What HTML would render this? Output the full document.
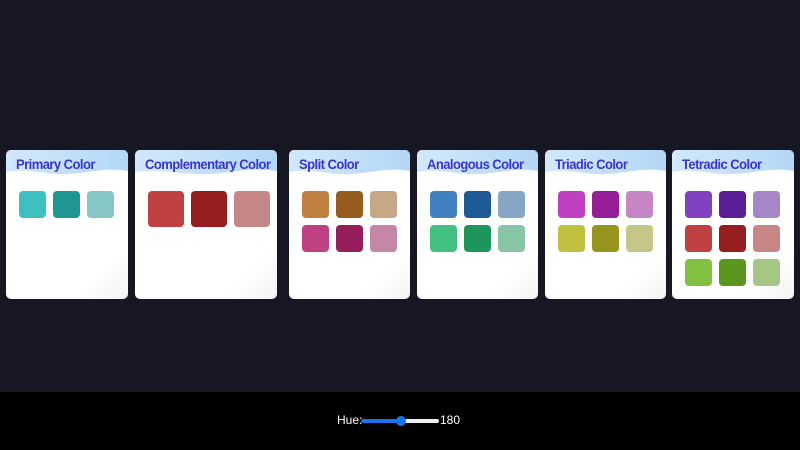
<!DOCTYPE html><html><head><style>
body{margin:0;width:800px;height:450px;background:#161722;position:relative;overflow:hidden;font-family:"Liberation Sans",sans-serif}
.card{position:absolute;top:150px;height:149px;background:linear-gradient(135deg,#fff 80%,#f3f3f5);border-radius:5px;overflow:hidden}
.hd{position:absolute;left:0;top:0;right:0;height:28px}
.hd svg{position:absolute;left:0;top:0;width:100%;height:28px}
.t{position:absolute;left:10px;top:6px;font-size:14px;font-weight:bold;color:#3b35c8;letter-spacing:-0.6px;white-space:nowrap;transform:scaleX(0.93);transform-origin:left}
.s{position:absolute;border-radius:4px}
.bar{position:absolute;left:0;top:392px;width:800px;height:58px;background:#000}
</style></head><body>
<div id="c"></div>
<div class="bar">
<span style="position:absolute;left:337px;top:21px;color:#fff;font-size:12px">Hue:</span>
<div style="position:absolute;left:361px;top:27px;width:40px;height:4px;background:#1a73e8;border-radius:2px"></div>
<div style="position:absolute;left:401px;top:27px;width:38px;height:4px;background:#eee;border-radius:2px"></div>
<div style="position:absolute;left:396px;top:24px;width:10px;height:10px;background:#1a73e8;border-radius:50%"></div>
<span style="position:absolute;left:440px;top:21px;color:#fff;font-size:12px">180</span>
</div>
<script>
var cards=[
["Primary Color",6,122,27,34,[["#3fc0c0","#1e9691","#86c6c6"]]],
["Complementary Color",135,142,36,43,[["#c04141","#951f1f","#c78686"]]],
["Split Color",289,121,27,34,[["#c08140","#965b1e","#c7a886"],["#c04182","#961e5b","#c686a8"]]],
["Analogous Color",417,121,27,34,[["#4181c0","#1e5a96","#86a6c6"],["#41c081","#1e965b","#86c6a6"]]],
["Triadic Color",545,121,27,34,[["#c041c0","#961e96","#c686c6"],["#c0c041","#96961e","#c6c686"]]],
["Tetradic Color",672,122,27,34,[["#8241c0","#5b1e96","#a686c6"],["#c04141","#961e1e","#c68686"],["#82c041","#5b961e","#a6c686"]]]];
var h="";
cards.forEach(function(c){
h+='<div class="card" style="left:'+c[1]+'px;width:'+c[2]+'px"><div class="hd"><svg viewBox="0 0 100 28" preserveAspectRatio="none"><defs><linearGradient id="g" x1="0" x2="1"><stop offset="0" stop-color="#d2e8fb"/><stop offset="1" stop-color="#b2d8f6"/></linearGradient></defs><path d="M0 0H100V21C80 17 70 23 50 24C30 25 20 18 0 22Z" fill="url(#g)"/></svg><div class="t">'+c[0]+'</div></div>';
c[5].forEach(function(r,ri){r.forEach(function(col,ci){
h+='<div class="s" style="left:'+(13+ci*c[4])+'px;top:'+(41+ri*c[4])+'px;width:'+c[3]+'px;height:'+c[3]+'px;background:'+col+'"></div>';});});
h+='</div>';});
document.getElementById("c").innerHTML=h;
</script>
</body></html>
